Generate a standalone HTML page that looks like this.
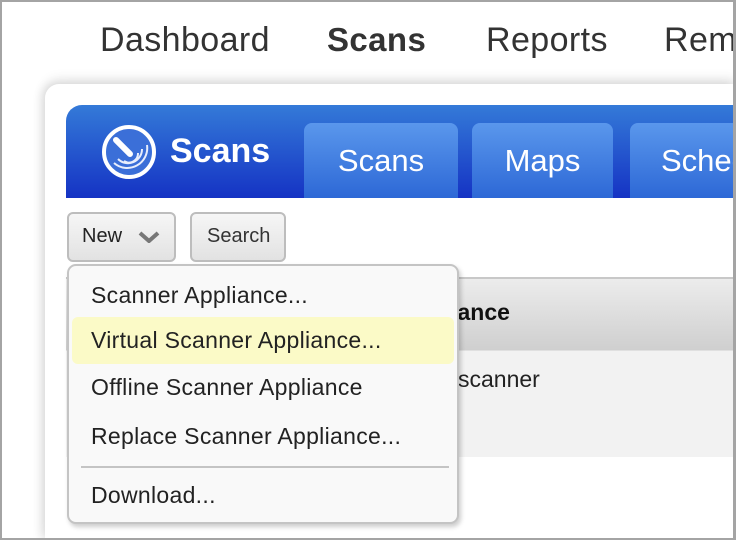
<!DOCTYPE html><html><head><style>
*{box-sizing:border-box;margin:0;padding:0}
html,body{width:736px;height:540px;overflow:hidden}
body{background:#fff;font-family:"Liberation Sans",Arial,sans-serif}
.wrap{position:relative;width:736px;height:540px;overflow:hidden}
.frame{position:absolute;left:0;top:0;width:736px;height:540px;border:2px solid #a4a4a4;border-right-width:3px;z-index:50;pointer-events:none}
.nav{position:absolute;top:21px;font-size:34px;color:#333;white-space:nowrap;letter-spacing:0.4px}
.card{position:absolute;left:45px;top:84px;width:691px;height:456px;background:#fff;border-radius:14px 0 0 0;box-shadow:0 -4px 12px rgba(0,0,0,.12),-4px 0 10px rgba(0,0,0,.08)}
.hdr{position:absolute;left:66px;top:105px;width:670px;height:93px;border-radius:16px 0 0 0;background:linear-gradient(#347ad8,#1533c4)}
.tab{position:absolute;top:123px;height:75px;border-radius:8px 8px 0 0;background:linear-gradient(#5a97ec,#2d68d6);color:#fff;font-size:31px;padding-top:20px;text-align:center;overflow:hidden;white-space:nowrap}
.btn{position:absolute;top:212px;height:50px;border:2px solid #bdbdbd;border-radius:6px;background:linear-gradient(#f6f6f6,#e2e2e2);font-size:20px;color:#222}
.menu{position:absolute;left:67px;top:264px;width:392px;height:260px;background:#f9f9f9;border:2px solid #c4c4c4;border-radius:9px;box-shadow:2px 3px 5px rgba(0,0,0,.2);z-index:5}
.mi{position:absolute;left:22px;font-size:23px;color:#222;white-space:nowrap;letter-spacing:0.3px}
</style></head><body><div class="wrap">
<div class="nav" style="left:100px">Dashboard</div>
<div class="nav" style="left:327px;font-weight:bold;font-size:33px">Scans</div>
<div class="nav" style="left:486px">Reports</div>
<div class="nav" style="left:664px">Remediation</div>
<div class="card"></div>
<div class="hdr"></div>
<svg style="position:absolute;left:100px;top:123px" width="58" height="58" viewBox="0 0 58 58">
<circle cx="29" cy="29" r="25" fill="#3b6fd8" stroke="#fff" stroke-width="4"/>
<path d="M16 17 L30 31" stroke="#fff" stroke-width="6" stroke-linecap="round"/>
<path d="M18 36 A14 14 0 0 0 42 26 M14 40 A20 20 0 0 0 47 22 M24 38 A9 9 0 0 0 38 30" stroke="#e8eefc" stroke-width="2" fill="none"/>
</svg>
<div style="position:absolute;left:170px;top:132px;font-size:34px;font-weight:bold;color:#fff">Scans</div>
<div class="tab" style="left:304px;width:154px">Scans</div>
<div class="tab" style="left:472px;width:141px">Maps</div>
<div class="tab" style="left:630px;width:106px;text-align:left;padding-left:31px;border-radius:8px 0 0 0">Schedules</div>
<div class="btn" style="left:67px;width:109px;padding:11px 0 0 13px">New <svg width="22" height="12" viewBox="0 0 22 12" style="margin-left:10px;vertical-align:middle"><path d="M2 2 L11 10 L20 2" stroke="#777" stroke-width="4" fill="none"/></svg></div>
<div class="btn" style="left:190px;width:96px;padding:11px 0 0 15px;color:#333">Search</div>
<div style="position:absolute;left:66px;top:277px;width:670px;height:73px;background:linear-gradient(#ececec,#cfcfcf);border-top:2px solid #c8c8c8"></div>
<div style="position:absolute;left:66px;top:350px;width:670px;height:107px;background:#f2f2f2;border-top:1px solid #e0e0e0"></div>
<div style="position:absolute;left:400px;top:299px;font-size:23px;font-weight:bold;color:#111">Appliance</div>
<div style="position:absolute;left:458px;top:366px;font-size:23px;color:#222">scanner</div>
<div class="menu">
<div style="position:absolute;left:3px;top:51px;width:382px;height:47px;background:#fbfac7;border-radius:6px"></div>
<div class="mi" style="top:16px">Scanner Appliance...</div>
<div class="mi" style="top:61px">Virtual Scanner Appliance...</div>
<div class="mi" style="top:108px">Offline Scanner Appliance</div>
<div class="mi" style="top:157px">Replace Scanner Appliance...</div>
<div style="position:absolute;left:12px;top:200px;width:368px;height:2px;background:#c4c4c4"></div>
<div class="mi" style="top:216px">Download...</div>
</div>
<div class="frame"></div>
</div></body></html>
